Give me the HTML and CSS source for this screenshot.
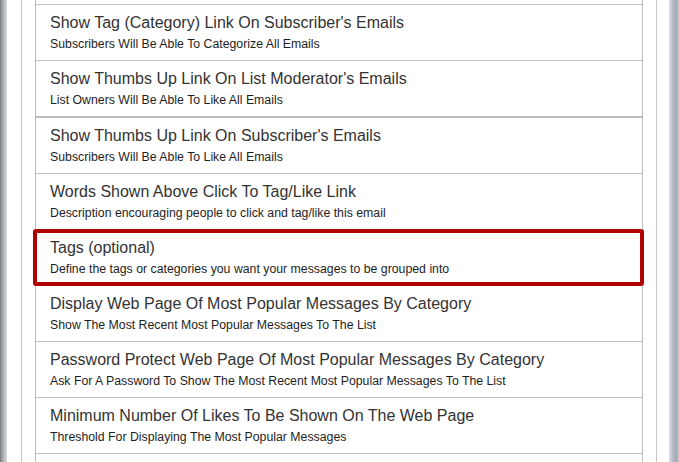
FILE: index.html
```html
<!DOCTYPE html>
<html>
<head>
<meta charset="utf-8">
<link rel="stylesheet" href="styles.css">
</head>
<body>
<div class="page">
  <div class="edge-left"></div>
  <div class="main">
    <div class="frame">
      <div class="list">
        <div class="row row-cut-top"></div>
        <div class="row">
          <div class="title">Show Tag (Category) Link On Subscriber's Emails</div>
          <div class="sub">Subscribers Will Be Able To Categorize All Emails</div>
        </div>
        <div class="row row-strong">
          <div class="title">Show Thumbs Up Link On List Moderator's Emails</div>
          <div class="sub">List Owners Will Be Able To Like All Emails</div>
        </div>
        <div class="row">
          <div class="title">Show Thumbs Up Link On Subscriber's Emails</div>
          <div class="sub">Subscribers Will Be Able To Like All Emails</div>
        </div>
        <div class="row">
          <div class="title">Words Shown Above Click To Tag/Like Link</div>
          <div class="sub">Description encouraging people to click and tag/like this email</div>
        </div>
        <div class="row row-highlight">
          <div class="title">Tags (optional)</div>
          <div class="sub">Define the tags or categories you want your messages to be grouped into</div>
        </div>
        <div class="row">
          <div class="title">Display Web Page Of Most Popular Messages By Category</div>
          <div class="sub">Show The Most Recent Most Popular Messages To The List</div>
        </div>
        <div class="row">
          <div class="title">Password Protect Web Page Of Most Popular Messages By Category</div>
          <div class="sub">Ask For A Password To Show The Most Recent Most Popular Messages To The List</div>
        </div>
        <div class="row">
          <div class="title">Minimum Number Of Likes To Be Shown On The Web Page</div>
          <div class="sub">Threshold For Displaying The Most Popular Messages</div>
        </div>
        <div class="row"></div>
      </div>
    </div>
  </div>
  <div class="edge-right"></div>
</div>
</body>
</html>
```

FILE: styles.css
```css
html, body {
  margin: 0;
  padding: 0;
  background: #ffffff;
}

.page {
  display: flex;
  width: 679px;
  height: 462px;
  overflow: hidden;
  font-family: "Liberation Sans", Arial, sans-serif;
}

.edge-left {
  width: 7px;
  flex: none;
  background: linear-gradient(to right, #7a7c80, #a9abae 40%, #dcdddf);
}

.edge-right {
  width: 10px;
  flex: none;
  background: linear-gradient(to right, #dde1e7, #b3bac4 40%, #a4abb6 70%, #bfc5ce);
}

.main {
  flex: 1;
  padding: 0 12px 0 14px;
  background: #ffffff;
}

.frame {
  height: 100%;
  border-left: 1px solid #c9c9c9;
  border-right: 1px solid #c9c9c9;
  padding: 0 13px;
}

.list {
  border-left: 1px solid #bdbdbd;
  border-right: 1px solid #bdbdbd;
}

.row {
  position: relative;
  height: 56px;
  box-sizing: border-box;
  padding: 9px 0 0 14px;
  border-bottom: 1px solid #c2c2c2;
}

.row-cut-top {
  height: 5px;
  padding: 0;
}

.row-strong {
  height: 57px;
  border-bottom: 2px solid #bcbcbc;
}

.row-highlight::after {
  content: "";
  position: absolute;
  left: -3px;
  right: -2px;
  top: -1px;
  bottom: -1px;
  border: 4px solid #b10000;
  border-radius: 3px;
}

.title {
  font-size: 16px;
  line-height: 18px;
  color: #333333;
  white-space: nowrap;
}

.sub {
  margin-top: 5px;
  font-size: 12.3px;
  line-height: 15px;
  color: #1e1e1e;
  white-space: nowrap;
}
```
